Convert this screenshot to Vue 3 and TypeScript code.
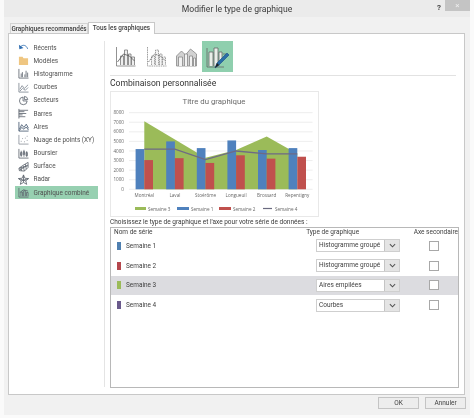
<script setup lang="ts">
interface NavItem { label: string; paths: string[]; stroke: string; fill?: string; fillPaths?: string[] }
const grey = '#5f6670'
const nav: NavItem[] = [
  { label: 'Récents', stroke: '#2f6db0', paths: ['M2.5 5.5C5 2.5 9 3 10.5 7.5'], fill: '#2f6db0', fillPaths: ['M1 3L1.5 8L6 6.5Z'] },
  { label: 'Modèles', stroke: '#e8bd6e', paths: [], fill: '#efc681', fillPaths: ['M1 2H5L6 3.5H11V11H1Z'] },
  { label: 'Histogramme', stroke: grey, paths: ['M1 1V11H11.5', 'M3.5 10V6', 'M4.8 10V4.5', 'M7.5 10V7', 'M8.8 10V3', 'M10.5 10V5'] },
  { label: 'Courbes', stroke: '#7d8590', paths: ['M1 1V11H11.5', 'M2 8L4.5 4L7 7L11 3', 'M2 10L5 7L8 9L11 6'] },
  { label: 'Secteurs', stroke: grey, paths: ['M10 6.5A4.2 4.2 0 1 1 5.5 2.2V6.5H10', 'M7 1.5A4 4 0 0 1 10.7 5H7Z'] },
  { label: 'Barres', stroke: grey, paths: ['M1 1V11.5', 'M1 2.5H11', 'M1 4H7', 'M1 6H9', 'M1 7.5H5', 'M1 9.5H8'] },
  { label: 'Aires', stroke: '#44586f', paths: ['M1 1V11H11.5', 'M1.5 9L4 4L6.5 7L9 3.5L11.5 8', 'M1.5 10.5L4 7L6.5 9L9 6.5L11.5 10'] },
  { label: 'Nuage de points (XY)', stroke: '#8a919a', paths: ['M1 1V11H11.5', 'M3 8H4', 'M4.5 5H5.5', 'M6.5 8.5H7.5', 'M7.5 4.5H8.5', 'M9.5 7H10.5', 'M9.5 2.5H10.5'] },
  { label: 'Boursier', stroke: grey, paths: ['M1 1V11H11.5', 'M3.5 3V9.5', 'M2.8 5H4.2V8H2.8Z', 'M6.5 2V9.5', 'M5.8 4H7.2V7H5.8Z', 'M9.5 3.5V9.5', 'M8.8 5H10.2V8.5H8.8Z'] },
  { label: 'Surface', stroke: grey, paths: ['M1 8L5 5L11 1.5', 'M1 8L1.5 10.5L7 11L11 7V1.5', 'M3 6.5L4 10.8', 'M5.5 5L7 11', 'M8 3.3L9 9', 'M1.5 10L10.5 4.5', 'M1 8L11 5'] },
  { label: 'Radar', stroke: grey, paths: ['M6 1L7.5 4.6L11.5 5L8.5 7.5L9.5 11.3L6 9.2L2.5 11.3L3.5 7.5L.5 5L4.5 4.6Z', 'M6 1V9.2', 'M.5 5L8.5 7.5', 'M11.5 5L3.5 7.5'] },
  { label: 'Graphique combiné', stroke: grey, paths: ['M1 1V11H11.5', 'M3.2 10V5.5H5V10', 'M6.2 10V4H8V10', 'M9.2 10V6H11V10', 'M2 6L6 3L11 4.5'] }
]

const values = [
  { name: 'Montréal', blue: 4200, red: 3050, green: 7100, line: 4200 },
  { name: 'Laval', blue: 5000, red: 3250, green: 5200, line: 4200 },
  { name: 'Stoérôme', blue: 4300, red: 2750, green: 3300, line: 3100 },
  { name: 'Longueuil', blue: 5100, red: 3550, green: 4100, line: 4000 },
  { name: 'Brossard', blue: 4100, red: 3200, green: 5500, line: 3700 },
  { name: 'Repentigny', blue: 4300, red: 3400, green: 3700, line: 3700 }
]
const x0 = 19
const catW = 30.6
const baseY = 98.3
const unit = 9.58 / 1000
const yOf = (v: number) => baseY - v * unit
const cx = (i: number) => x0 + catW * (i + 0.5)
const ticks = [0, 1000, 2000, 3000, 4000, 5000, 6000, 7000, 8000]
const areaPts = [`${cx(0)},${baseY}`, ...values.map((d, i) => `${cx(i)},${yOf(d.green)}`), `${cx(5)},${baseY}`].join(' ')
const linePts = values.map((d, i) => `${cx(i)},${yOf(d.line)}`).join(' ')

const series = [
  { name: 'Semaine 1', color: '#4f7fb0', type: 'Histogramme groupé', selected: false },
  { name: 'Semaine 2', color: '#b5474d', type: 'Histogramme groupé', selected: false },
  { name: 'Semaine 3', color: '#9bbb59', type: 'Aires empilées', selected: true },
  { name: 'Semaine 4', color: '#6a5a8c', type: 'Courbes', selected: false }
]
const legend = [
  { x: 25, w: 11, h: 3, color: '#9bbb59', tx: 38, label: 'Semaine 3' },
  { x: 67, w: 12, h: 3, color: '#4f81bd', tx: 81, label: 'Semaine 1' },
  { x: 109, w: 12, h: 3, color: '#c0504d', tx: 123, label: 'Semaine 2' },
  { x: 153, w: 9, h: 1.2, color: '#6b6b80', tx: 165, label: 'Semaine 4' }
]
</script>

<template>
  <div class="page">
    <div class="window">
      <header class="titlebar">
        <span class="title">Modifier le type de graphique</span>
        <span class="help">?</span>
        <span class="close">×</span>
      </header>

      <nav class="tabs">
        <span class="tab">Graphiques recommandés</span>
        <span class="tab active">Tous les graphiques</span>
      </nav>

      <section class="panel">
        <aside class="sidebar">
          <div v-for="item in nav" :key="item.label" class="nav-item" :class="{ on: item.label === 'Graphique combiné' }">
            <svg class="nav-icon" viewBox="0 0 12 12" width="11" height="11">
              <path v-for="d in item.fillPaths" :key="d" :d="d" :fill="item.fill" stroke="none" />
              <path v-for="d in item.paths" :key="d" :d="d" fill="none" :stroke="item.stroke" stroke-width="0.9" />
            </svg>
            <span>{{ item.label }}</span>
          </div>
        </aside>

        <main class="content">
          <div class="variants">
            <div class="variant">
              <svg viewBox="0 0 20 20" width="21" height="20" fill="none" stroke="#777" stroke-width="0.8">
                <path d="M1 0V19H20" /><path d="M5 18V9H8V18M9 18V3H12V18M13 18V7H15.5V18M16 18V10H19V18" fill="#eee" /><path d="M2 15L8 7L14 9L19 14" stroke="#555" />
              </svg>
            </div>
            <div class="variant">
              <svg viewBox="0 0 20 20" width="21" height="20" fill="none" stroke="#888" stroke-width="0.8" stroke-dasharray="1.6 0.7">
                <path d="M1 0V19H20" /><path d="M5 18V9H8V18M9 18V3H12V18M13 18V7H15.5V18M16 18V10H19V18" fill="#f4f4f4" /><path d="M2 15L8 7L14 9L19 14" stroke="#666" />
              </svg>
            </div>
            <div class="variant">
              <svg viewBox="0 0 20 20" width="21" height="20" fill="none" stroke="#888" stroke-width="0.8">
                <path d="M0 9L5 4L9 8L14 2L20 7V19H0Z" fill="#d2d2d2" /><path d="M2 19V10H6V19M8 19V7H11V19M13 19V9H16V19M17 19V11H19V19" fill="#f2f2f2" />
              </svg>
            </div>
            <div class="variant selected">
              <svg viewBox="0 0 24 24" width="24" height="24" fill="none" stroke="#666" stroke-width="0.8">
                <path d="M1 3V22H18" /><path d="M3 21V7H7V21M8 21V3H12V21M13 21V7H16V15" fill="#e9efe9" /><path d="M17 9H20V12" />
                <path d="M9 23L11 18L21 8L23 10L13 20Z" fill="#2a6ea6" stroke="#245e90" /><path d="M9 23L11 18L13 20Z" fill="#222" stroke="none" />
              </svg>
            </div>
          </div>
          <div class="rule"></div>
          <h2 class="heading">Combinaison personnalisée</h2>

          <div class="chart">
            <svg viewBox="0 0 209 126" width="209" height="126">
              <text x="104" y="13" text-anchor="middle" class="chart-title">Titre du graphique</text>
              <g v-for="t in ticks" :key="t">
                <line :x1="x0" :x2="x0 + catW * 6" :y1="yOf(t)" :y2="yOf(t)" stroke="#e6e6e6" stroke-width="0.7" />
                <text :x="14" :y="yOf(t) + 1.6" text-anchor="end" class="axis">{{ t }}</text>
              </g>
              <polygon :points="areaPts" fill="#9bbb59" />
              <g v-for="(d, i) in values" :key="d.name">
                <rect :x="cx(i) - 8.7" :y="yOf(d.blue)" width="8.7" :height="d.blue * unit" fill="#4f81bd" />
                <rect :x="cx(i)" :y="yOf(d.red)" width="8.7" :height="d.red * unit" fill="#c0504d" />
                <text :x="cx(i)" y="106" text-anchor="middle" class="axis">{{ d.name }}</text>
              </g>
              <polyline :points="linePts" fill="none" stroke="#6e6a85" stroke-width="1.3" />
              <g v-for="l in legend" :key="l.label">
                <rect :x="l.x" :y="117.5 - l.h / 2" :width="l.w" :height="l.h" :fill="l.color" />
                <text :x="l.tx" y="119.5" class="axis">{{ l.label }}</text>
              </g>
            </svg>
          </div>

          <p class="caption">Choisissez le type de graphique et l'axe pour votre série de données :</p>

          <div class="table">
            <div class="thead">
              <span class="th-name">Nom de série</span>
              <span class="th-type">Type de graphique</span>
              <span class="th-axis">Axe secondaire</span>
            </div>
            <div v-for="s in series" :key="s.name" class="row" :class="{ selected: s.selected }">
              <span class="name">
                <i class="swatch" :style="{ background: s.color }"></i>{{ s.name }}
              </span>
              <span class="combo">
                <span class="combo-text">{{ s.type }}</span>
                <span class="combo-btn">
                  <svg viewBox="0 0 8 5" width="7" height="5"><path d="M1 1L4 4L7 1" fill="none" stroke="#555" stroke-width="1.2" /></svg>
                </span>
              </span>
              <span class="check-cell"><span class="check"></span></span>
            </div>
          </div>
        </main>
      </section>

      <footer class="footer">
        <button class="btn ok">OK</button>
        <button class="btn">Annuler</button>
      </footer>
    </div>
  </div>
</template>

<style scoped>
.page { width: 474px; height: 418px; background: #fafafa; overflow: hidden; font-family: Roboto, "Liberation Sans", sans-serif; color: #333; font-size: 6.5px; filter: blur(0.3px); }
.window { width: 466px; height: 415px; margin-left: 4px; background: #f1f1f1; display: flex; flex-direction: column; }
.titlebar { height: 17px; flex: none; background: #ebebeb; position: relative; display: flex; justify-content: center; align-items: center; }
.title { font-size: 8.6px; color: #3c3c3c; }
.help { position: absolute; left: 433px; top: 2px; font-size: 8px; font-weight: 700; color: #444; line-height: 11px; }
.close { position: absolute; left: 441px; top: 0; width: 25px; height: 11px; background: #c4c4c4; color: #eee; font-size: 8px; line-height: 11px; text-align: center; }
.tabs { height: 16px; flex: none; display: flex; align-items: flex-end; padding-left: 6px; }
.tab { height: 10px; line-height: 10px; width: 78px; font-size: 6.4px; font-weight: 500; color: #3c3c3c; white-space: nowrap; text-align: center; background: #f1f1f1; border: 1px solid #d4d4d4; border-bottom: none; box-sizing: border-box; }
.tab.active { height: 12px; line-height: 11px; width: 67px; background: #fff; border-color: #c8c8c8; position: relative; top: 1px; z-index: 1; }
.panel { width: 457px; height: 362px; margin-left: 4px; flex: none; box-sizing: border-box; background: #fff; border: 1px solid #c8c8c8; display: flex; padding-top: 7px; padding-bottom: 7px; }
.sidebar { width: 96px; flex: none; box-sizing: border-box; border-right: 1.5px solid #e4e4e4; margin-right: 5px; padding: 0 6px; }
.nav-item { height: 13.2px; display: flex; align-items: center; gap: 4.5px; padding-left: 3px; font-size: 6.45px; color: #505050; white-space: nowrap; }
.nav-item.on { background: #97d0b1; height: 13px; }
.nav-icon { flex: none; }
.content { width: 349px; flex: none; display: flex; flex-direction: column; }
.variants { display: flex; height: 31px; padding-left: 5px; gap: 9.5px; flex: none; }
.variant { width: 21px; display: flex; align-items: center; justify-content: center; }
.variant.selected { width: 31px; margin-left: -4.5px; background: #8fcfae; }
.rule { height: 1px; background: #e2e2e2; margin-top: 3px; flex: none; width: 346px; }
.heading { margin: 0; font-size: 8.6px; line-height: 14px; font-weight: 400; color: #333; flex: none; white-space: nowrap; }
.chart { width: 209px; height: 126px; margin-top: 1px; box-sizing: border-box; outline: 1px solid #e8e8e8; outline-offset: -1px; flex: none; }
.chart svg { display: block; }
.chart-title { font-size: 7.8px; fill: #6a6a6a; font-family: Roboto, sans-serif; }
.axis { font-size: 4.6px; fill: #666; font-family: "Open Sans", sans-serif; }
.caption { margin: 0; font-size: 6.5px; height: 10px; line-height: 10px; color: #3a3a3a; white-space: nowrap; flex: none; }
.table { width: 349px; height: 161px; box-sizing: border-box; border: 1px solid #b8b8b8; flex: none; }
.thead { display: flex; height: 8px; line-height: 8px; font-size: 6.5px; color: #3f3f3f; white-space: nowrap; }
.th-name { width: 196px; padding-left: 3px; box-sizing: border-box; }
.th-type { width: 108px; }
.row { height: 19.75px; display: flex; align-items: center; }
.row.selected { background: #dcdce0; }
.name { width: 205px; flex: none; display: flex; align-items: center; gap: 5px; padding-left: 6px; box-sizing: border-box; font-size: 6.45px; color: #3f3f3f; }
.swatch { width: 4px; height: 8px; display: block; }
.combo { width: 84px; height: 13px; flex: none; box-sizing: border-box; border: 1px solid #cfcfcf; background: #fff; display: flex; font-size: 6.5px; color: #3f3f3f; line-height: 11px; white-space: nowrap; }
.combo-text { flex: 1; padding-left: 2px; }
.combo-btn { width: 14px; background: #e4e4e4; border-left: 1px solid #c4c4c4; display: flex; align-items: center; justify-content: center; }
.check-cell { width: 58px; box-sizing: border-box; padding-left: 10px; display: flex; justify-content: center; }
.check { width: 8px; height: 8px; background: #fff; border: 1px solid #a8a8a8; display: block; }
.footer { flex: 1; display: flex; justify-content: flex-end; align-items: flex-start; gap: 6px; padding-top: 2px; padding-right: 4px; }
.btn { width: 41px; height: 12px; padding: 0; box-sizing: border-box; background: #ededed; border: 1px solid #c4c4c4; font: inherit; font-size: 6.5px; color: #3f3f3f; line-height: 10px; }
</style>
